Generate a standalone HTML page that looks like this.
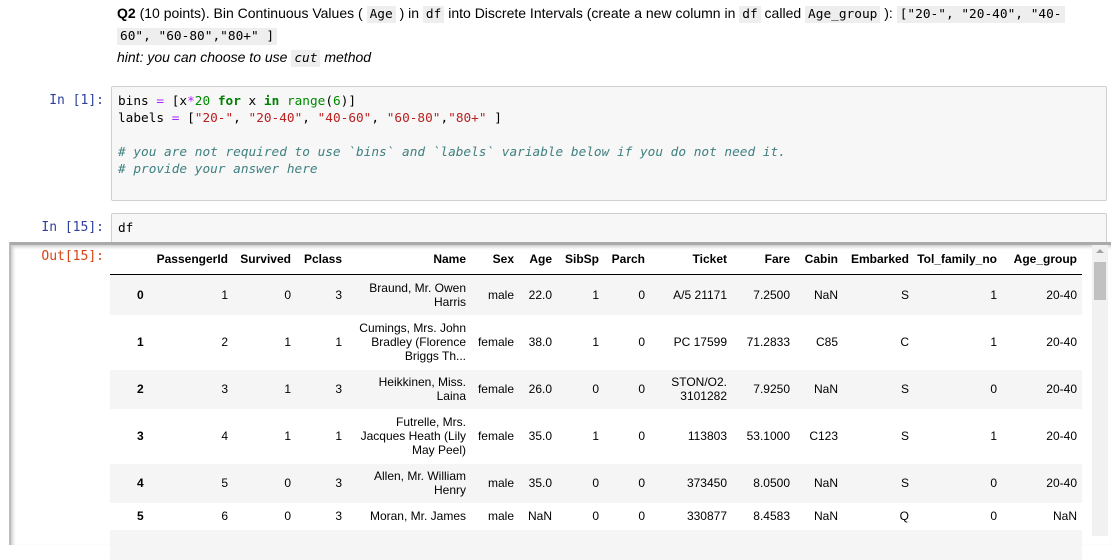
<!DOCTYPE html>
<html><head><meta charset="utf-8"><style>
body{margin:0;width:1120px;height:536px;overflow:hidden;background:#fff;font-family:"Liberation Sans",Arial,sans-serif;position:relative}
.abs{position:absolute}
.md{left:117px;font-size:14px;color:#000;line-height:21px}
code{font-family:"DejaVu Sans Mono","Liberation Mono",monospace;font-size:12.8px;background:#eee;padding:1px 3px}
.prompt{font-family:"DejaVu Sans Mono","Liberation Mono",monospace;font-size:13px;text-align:right;width:104px;left:0}
.cell{left:111px;width:994px;background:#f7f7f7;border:1px solid #cfcfcf;border-radius:2px}
.code{font-family:"DejaVu Sans Mono","Liberation Mono",monospace;font-size:12.75px;line-height:17px;white-space:pre;color:#000}
.k{color:#008000;font-weight:bold}.o{color:#aa22ff}.s{color:#ba2121}.n{color:#080}.c{color:#408080;font-style:italic}
table{border-collapse:collapse;font-size:12px;color:#000;table-layout:fixed}
th,td{text-align:right;padding:0 5px 0 0;vertical-align:middle;line-height:14px}
th{font-weight:bold;height:30px;padding-top:1px;border-bottom:1px solid #000}
tr.g td{background:#f5f5f5}
td.i{text-align:left;padding-left:27px;font-weight:bold}
</style></head><body>
<div class="abs md" style="top:3px;width:980px">
<b>Q2</b> (10 points). Bin Continuous Values ( <code>Age</code> ) in <code>df</code> into Discrete Intervals (create a new column in <code>df</code> called <code>Age_group</code> ): <code>["20-", "20-40", "40-</code><br><code>60", "60-80","80+" ]</code><br><i>hint: you can choose to use <code>cut</code> method</i>
</div>
<div class="abs prompt" style="top:93px;color:#303F9F">In [1]:</div>
<div class="abs cell" style="top:86px;height:113px">
<div class="code" style="padding:6px 0 0 6px">bins <span class="o">=</span> [x<span class="o">*</span><span class="n">20</span> <span class="k">for</span> x <span class="k">in</span> <span class="n">range</span>(<span class="n">6</span>)]
labels <span class="o">=</span> [<span class="s">"20-"</span>, <span class="s">"20-40"</span>, <span class="s">"40-60"</span>, <span class="s">"60-80"</span>,<span class="s">"80+"</span> ]

<span class="c"># you are not required to use `bins` and `labels` variable below if you do not need it.</span>
<span class="c"># provide your answer here</span></div></div>
<div class="abs prompt" style="top:220px;color:#303F9F">In [15]:</div>
<div class="abs cell" style="top:213px;height:30px"><div class="code" style="padding:6px 0 0 6px">df</div></div>
<div class="abs" style="left:9px;top:242px;width:1100px;height:300px;border-left:2px solid #bbb;border-top:3px solid #aaa;box-shadow:inset 2px 2px 3px rgba(0,0,0,.2)"></div>
<div class="abs prompt" style="top:249px;color:#D84315">Out[15]:</div>
<div class="abs" style="left:1092px;top:245px;width:16px;height:291px;background:#f1f1f1"></div>
<div class="abs" style="left:1094px;top:262px;width:12px;height:38px;background:#c1c1c1"></div>
<div class="abs" style="left:1096px;top:249px;width:0;height:0;border:4px solid transparent;border-bottom:4px solid #a3a3a3;border-top:0"></div>
<table class="abs" style="left:110px;top:243px;width:972px">
<colgroup><col style="width:40px"><col style="width:83px"><col style="width:63px"><col style="width:51px"><col style="width:124px"><col style="width:48px"><col style="width:38px"><col style="width:47px"><col style="width:46px"><col style="width:82px"><col style="width:63px"><col style="width:48px"><col style="width:71px"><col style="width:88px"><col style="width:80px"></colgroup>
<tr><th></th><th>PassengerId</th><th>Survived</th><th>Pclass</th><th>Name</th><th>Sex</th><th>Age</th><th>SibSp</th><th>Parch</th><th>Ticket</th><th>Fare</th><th>Cabin</th><th>Embarked</th><th>Tol_family_no</th><th>Age_group</th></tr>
<tr class="g" style="height:40px"><td class="i">0</td><td>1</td><td>0</td><td>3</td><td>Braund, Mr. Owen<br>Harris</td><td>male</td><td>22.0</td><td>1</td><td>0</td><td>A/5 21171</td><td>7.2500</td><td>NaN</td><td>S</td><td>1</td><td>20-40</td></tr>
<tr style="height:55px"><td class="i">1</td><td>2</td><td>1</td><td>1</td><td>Cumings, Mrs. John<br>Bradley (Florence<br>Briggs Th...</td><td>female</td><td>38.0</td><td>1</td><td>0</td><td>PC 17599</td><td>71.2833</td><td>C85</td><td>C</td><td>1</td><td>20-40</td></tr>
<tr class="g" style="height:39px"><td class="i">2</td><td>3</td><td>1</td><td>3</td><td>Heikkinen, Miss.<br>Laina</td><td>female</td><td>26.0</td><td>0</td><td>0</td><td>STON/O2.<br>3101282</td><td>7.9250</td><td>NaN</td><td>S</td><td>0</td><td>20-40</td></tr>
<tr style="height:55px"><td class="i">3</td><td>4</td><td>1</td><td>1</td><td>Futrelle, Mrs.<br>Jacques Heath (Lily<br>May Peel)</td><td>female</td><td>35.0</td><td>1</td><td>0</td><td>113803</td><td>53.1000</td><td>C123</td><td>S</td><td>1</td><td>20-40</td></tr>
<tr class="g" style="height:39px"><td class="i">4</td><td>5</td><td>0</td><td>3</td><td>Allen, Mr. William<br>Henry</td><td>male</td><td>35.0</td><td>0</td><td>0</td><td>373450</td><td>8.0500</td><td>NaN</td><td>S</td><td>0</td><td>20-40</td></tr>
<tr style="height:27px"><td class="i">5</td><td>6</td><td>0</td><td>3</td><td>Moran, Mr. James</td><td>male</td><td>NaN</td><td>0</td><td>0</td><td>330877</td><td>8.4583</td><td>NaN</td><td>Q</td><td>0</td><td>NaN</td></tr>
<tr class="g" style="height:30px"><td></td><td></td><td></td><td></td><td></td><td></td><td></td><td></td><td></td><td></td><td></td><td></td><td></td><td></td><td></td></tr>
</table>
</body></html>
